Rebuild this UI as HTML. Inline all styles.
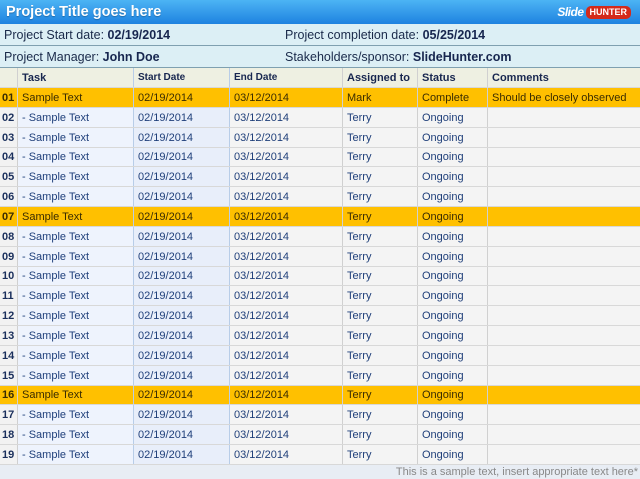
<!DOCTYPE html>
<html><head><meta charset="utf-8"><style>
*{margin:0;padding:0;box-sizing:border-box}
body{width:640px;height:479px;overflow:hidden;background:#f4f4f4;font-family:"Liberation Sans",Arial,sans-serif;position:relative}
.title{position:absolute;left:0;top:0;width:640px;height:24px;background:linear-gradient(#4cb4f4,#1e82e0);color:#fff;font-weight:bold;font-size:14.5px;line-height:24px;padding-left:6px;text-shadow:0 1px 1px rgba(0,0,0,.25)}
.logo{position:absolute;right:9px;top:5px;height:14px;display:flex;align-items:center;text-shadow:none}
.logo i{color:#fff;font-style:italic;font-size:12px;letter-spacing:-.5px;margin-right:2px;line-height:14px}
.logo b{background:#d42a1a;color:#fff;font-size:9px;padding:0 4px;border-radius:5px;font-weight:900;line-height:13px;height:13px}
.info{position:absolute;left:0;width:640px;height:22px;background:#dceff5;border-bottom:1px solid #7fa0b0;font-size:12.5px;line-height:22px;color:#1a2a4a}
.info span{position:absolute;top:0}
.info b{color:#17264f}
.r{position:absolute;left:0;width:640px;font-size:11px;color:#1f3f7a;border-bottom:1px solid #d8d8d8}
.r div{position:absolute;top:0;bottom:0;padding-left:4px;display:flex;align-items:center;border-right:1px solid #d0d0d0;white-space:nowrap;overflow:hidden}
.c0{left:0;width:18px;background:#f2f2f2;font-weight:bold;color:#1a2f5c;padding-left:2px!important}
.c1{left:18px;width:116px;background:#eef3fd;border-right-color:#b8cde8!important}
.c2{left:134px;width:96px;background:#e8eefa;border-right-color:#b8cde8!important}
.c3{left:230px;width:113px}
.c4{left:343px;width:75px}
.c5{left:418px;width:70px}
.c6{left:488px;width:152px;border-right:none!important}
.h{background:#eef0e2!important;font-weight:bold;color:#17264f}
.h div{background:#eef0e2}
.y,.y div{background:#ffc000!important;color:#3a2c00!important}
.foot{position:absolute;left:0;top:465px;width:640px;height:14px;background:#e8edf4;color:#888;font-size:11px;text-align:right;line-height:14px;padding-right:2px}
</style></head><body>
<div class="title">Project Title goes here<div class="logo"><i>Slide</i><b>HUNTER</b></div></div>
<div class="info" style="top:24px"><span style="left:4px">Project Start date: <b>02/19/2014</b></span><span style="left:285px">Project completion date: <b>05/25/2014</b></span></div>
<div class="info" style="top:46px"><span style="left:4px">Project Manager: <b>John Doe</b></span><span style="left:285px">Stakeholders/sponsor: <b>SlideHunter.com</b></span></div>
<div class="r h" style="top:68px;height:20px"><div class="c0"></div><div class="c1" style="background:#eef0e2">Task</div><div class="c2" style="background:#eef0e2;font-size:10px">Start Date</div><div class="c3" style="font-size:10px">End Date</div><div class="c4">Assigned to</div><div class="c5">Status</div><div class="c6">Comments</div></div>
<div class="r y" style="top:88px;height:20px"><div class="c0">01</div><div class="c1">Sample Text</div><div class="c2">02/19/2014</div><div class="c3">03/12/2014</div><div class="c4">Mark</div><div class="c5">Complete</div><div class="c6">Should be closely observed</div></div>
<div class="r" style="top:108px;height:20px"><div class="c0">02</div><div class="c1">- Sample Text</div><div class="c2">02/19/2014</div><div class="c3">03/12/2014</div><div class="c4">Terry</div><div class="c5">Ongoing</div><div class="c6"></div></div>
<div class="r" style="top:128px;height:20px"><div class="c0">03</div><div class="c1">- Sample Text</div><div class="c2">02/19/2014</div><div class="c3">03/12/2014</div><div class="c4">Terry</div><div class="c5">Ongoing</div><div class="c6"></div></div>
<div class="r" style="top:148px;height:19px"><div class="c0">04</div><div class="c1">- Sample Text</div><div class="c2">02/19/2014</div><div class="c3">03/12/2014</div><div class="c4">Terry</div><div class="c5">Ongoing</div><div class="c6"></div></div>
<div class="r" style="top:167px;height:20px"><div class="c0">05</div><div class="c1">- Sample Text</div><div class="c2">02/19/2014</div><div class="c3">03/12/2014</div><div class="c4">Terry</div><div class="c5">Ongoing</div><div class="c6"></div></div>
<div class="r" style="top:187px;height:20px"><div class="c0">06</div><div class="c1">- Sample Text</div><div class="c2">02/19/2014</div><div class="c3">03/12/2014</div><div class="c4">Terry</div><div class="c5">Ongoing</div><div class="c6"></div></div>
<div class="r y" style="top:207px;height:20px"><div class="c0">07</div><div class="c1">Sample Text</div><div class="c2">02/19/2014</div><div class="c3">03/12/2014</div><div class="c4">Terry</div><div class="c5">Ongoing</div><div class="c6"></div></div>
<div class="r" style="top:227px;height:20px"><div class="c0">08</div><div class="c1">- Sample Text</div><div class="c2">02/19/2014</div><div class="c3">03/12/2014</div><div class="c4">Terry</div><div class="c5">Ongoing</div><div class="c6"></div></div>
<div class="r" style="top:247px;height:20px"><div class="c0">09</div><div class="c1">- Sample Text</div><div class="c2">02/19/2014</div><div class="c3">03/12/2014</div><div class="c4">Terry</div><div class="c5">Ongoing</div><div class="c6"></div></div>
<div class="r" style="top:267px;height:19px"><div class="c0">10</div><div class="c1">- Sample Text</div><div class="c2">02/19/2014</div><div class="c3">03/12/2014</div><div class="c4">Terry</div><div class="c5">Ongoing</div><div class="c6"></div></div>
<div class="r" style="top:286px;height:20px"><div class="c0">11</div><div class="c1">- Sample Text</div><div class="c2">02/19/2014</div><div class="c3">03/12/2014</div><div class="c4">Terry</div><div class="c5">Ongoing</div><div class="c6"></div></div>
<div class="r" style="top:306px;height:20px"><div class="c0">12</div><div class="c1">- Sample Text</div><div class="c2">02/19/2014</div><div class="c3">03/12/2014</div><div class="c4">Terry</div><div class="c5">Ongoing</div><div class="c6"></div></div>
<div class="r" style="top:326px;height:20px"><div class="c0">13</div><div class="c1">- Sample Text</div><div class="c2">02/19/2014</div><div class="c3">03/12/2014</div><div class="c4">Terry</div><div class="c5">Ongoing</div><div class="c6"></div></div>
<div class="r" style="top:346px;height:20px"><div class="c0">14</div><div class="c1">- Sample Text</div><div class="c2">02/19/2014</div><div class="c3">03/12/2014</div><div class="c4">Terry</div><div class="c5">Ongoing</div><div class="c6"></div></div>
<div class="r" style="top:366px;height:20px"><div class="c0">15</div><div class="c1">- Sample Text</div><div class="c2">02/19/2014</div><div class="c3">03/12/2014</div><div class="c4">Terry</div><div class="c5">Ongoing</div><div class="c6"></div></div>
<div class="r y" style="top:386px;height:19px"><div class="c0">16</div><div class="c1">Sample Text</div><div class="c2">02/19/2014</div><div class="c3">03/12/2014</div><div class="c4">Terry</div><div class="c5">Ongoing</div><div class="c6"></div></div>
<div class="r" style="top:405px;height:20px"><div class="c0">17</div><div class="c1">- Sample Text</div><div class="c2">02/19/2014</div><div class="c3">03/12/2014</div><div class="c4">Terry</div><div class="c5">Ongoing</div><div class="c6"></div></div>
<div class="r" style="top:425px;height:20px"><div class="c0">18</div><div class="c1">- Sample Text</div><div class="c2">02/19/2014</div><div class="c3">03/12/2014</div><div class="c4">Terry</div><div class="c5">Ongoing</div><div class="c6"></div></div>
<div class="r" style="top:445px;height:20px"><div class="c0">19</div><div class="c1">- Sample Text</div><div class="c2">02/19/2014</div><div class="c3">03/12/2014</div><div class="c4">Terry</div><div class="c5">Ongoing</div><div class="c6"></div></div>
<div class="foot">This is a sample text, insert appropriate text here*</div>
</body></html>
